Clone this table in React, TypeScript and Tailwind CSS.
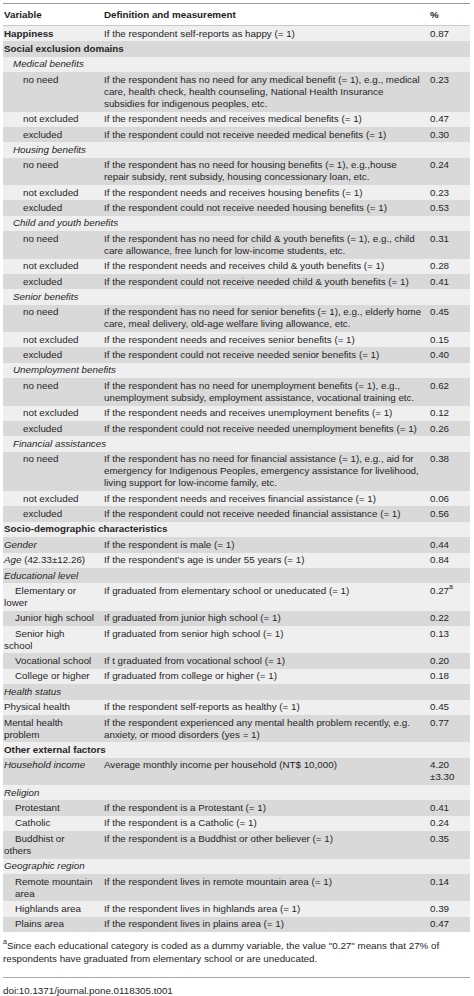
import type { ReactNode } from "react";

type Row = {
  label: ReactNode;
  lc: string;
  def?: string[];
  pct?: ReactNode;
  span?: boolean;
};

const SUB = "pl-[10px] italic";
const EX = "pl-[20px]";
const DEMO = "pl-[1px] indent-[11px]";
const PLAIN = "pl-[1px]";
const IT = "pl-[1px] italic";

const lines = (ls: string[]) =>
  ls.map((l, i) => (
    <span key={i}>
      {i > 0 && <br />}
      {l}
    </span>
  ));

const Sup = () => <span className="relative -top-[4px] align-top text-[7px] leading-[12px]">a</span>;

const domain = (title: string, rows: [string, string[], string][]): Row[] => [
  { label: title, lc: SUB, span: true },
  ...rows.map(([v, d, p]) => ({ label: v, lc: EX, def: d, pct: p })),
];

const rows: Row[] = [
  { label: "Happiness", lc: "pl-[1px] font-bold", def: ["If the respondent self-reports as happy (= 1)"], pct: "0.87" },
  { label: "Social exclusion domains", lc: "pl-[1px] font-bold", span: true },
  ...domain("Medical benefits", [
    ["no need", ["If the respondent has no need for any medical benefit (= 1), e.g., medical", "care, health check, health counseling, National Health Insurance", "subsidies for indigenous peoples, etc."], "0.23"],
    ["not excluded", ["If the respondent needs and receives medical benefits (= 1)"], "0.47"],
    ["excluded", ["If the respondent could not receive needed medical benefits (= 1)"], "0.30"],
  ]),
  ...domain("Housing benefits", [
    ["no need", ["If the respondent has no need for housing benefits (= 1), e.g.,house", "repair subsidy, rent subsidy, housing concessionary loan, etc."], "0.24"],
    ["not excluded", ["If the respondent needs and receives housing benefits (= 1)"], "0.23"],
    ["excluded", ["If the respondent could not receive needed housing benefits (= 1)"], "0.53"],
  ]),
  ...domain("Child and youth benefits", [
    ["no need", ["If the respondent has no need for child & youth benefits (= 1), e.g., child", "care allowance, free lunch for low-income students, etc."], "0.31"],
    ["not excluded", ["If the respondent needs and receives child & youth benefits (= 1)"], "0.28"],
    ["excluded", ["If the respondent could not receive needed child & youth benefits (= 1)"], "0.41"],
  ]),
  ...domain("Senior benefits", [
    ["no need", ["If the respondent has no need for senior benefits (= 1), e.g., elderly home", "care, meal delivery, old-age welfare living allowance, etc."], "0.45"],
    ["not excluded", ["If the respondent needs and receives senior benefits (= 1)"], "0.15"],
    ["excluded", ["If the respondent could not receive needed senior benefits (= 1)"], "0.40"],
  ]),
  ...domain("Unemployment benefits", [
    ["no need", ["If the respondent has no need for unemployment benefits (= 1), e.g.,", "unemployment subsidy, employment assistance, vocational training etc."], "0.62"],
    ["not excluded", ["If the respondent needs and receives unemployment benefits (= 1)"], "0.12"],
    ["excluded", ["If the respondent could not receive needed unemployment benefits (= 1)"], "0.26"],
  ]),
  ...domain("Financial assistances", [
    ["no need", ["If the respondent has no need for financial assistance (= 1), e.g., aid for", "emergency for Indigenous Peoples, emergency assistance for livelihood,", "living support for low-income family, etc."], "0.38"],
    ["not excluded", ["If the respondent needs and receives financial assistance (= 1)"], "0.06"],
    ["excluded", ["If the respondent could not receive needed financial assistance (= 1)"], "0.56"],
  ]),
  { label: "Socio-demographic characteristics", lc: "pl-[1px] font-bold", span: true },
  { label: "Gender", lc: IT, def: ["If the respondent is male (= 1)"], pct: "0.44" },
  {
    label: (
      <>
        <i>Age</i> (42.33±12.26)
      </>
    ),
    lc: PLAIN,
    def: ["If the respondent’s age is under 55 years (= 1)"],
    pct: "0.84",
  },
  { label: "Educational level", lc: IT, span: true },
  {
    label: lines(["Elementary or", "lower"]),
    lc: DEMO,
    def: ["If graduated from elementary school or uneducated (= 1)"],
    pct: (
      <>
        0.27
        <Sup />
      </>
    ),
  },
  { label: "Junior high school", lc: DEMO, def: ["If graduated from junior high school (= 1)"], pct: "0.22" },
  { label: lines(["Senior high", "school"]), lc: DEMO, def: ["If graduated from senior high school (= 1)"], pct: "0.13" },
  { label: "Vocational school", lc: DEMO, def: ["If t graduated from vocational school (= 1)"], pct: "0.20" },
  { label: "College or higher", lc: DEMO, def: ["If graduated from college or higher (= 1)"], pct: "0.18" },
  { label: "Health status", lc: IT, span: true },
  { label: "Physical health", lc: PLAIN, def: ["If the respondent self-reports as healthy (= 1)"], pct: "0.45" },
  {
    label: lines(["Mental health", "problem"]),
    lc: PLAIN,
    def: ["If the respondent experienced any mental health problem recently, e.g.", "anxiety, or mood disorders (yes = 1)"],
    pct: "0.77",
  },
  { label: "Other external factors", lc: "pl-[1px] font-bold", span: true },
  { label: "Household income", lc: IT, def: ["Average monthly income per household (NT$ 10,000)"], pct: lines(["4.20", "±3.30"]) },
  { label: "Religion", lc: IT, span: true },
  { label: "Protestant", lc: DEMO, def: ["If the respondent is a Protestant (= 1)"], pct: "0.41" },
  { label: "Catholic", lc: DEMO, def: ["If the respondent is a Catholic (= 1)"], pct: "0.24" },
  { label: lines(["Buddhist or", "others"]), lc: DEMO, def: ["If the respondent is a Buddhist or other believer (= 1)"], pct: "0.35" },
  { label: "Geographic region", lc: IT, span: true },
  { label: lines(["Remote mountain", "area"]), lc: "pl-[12px]", def: ["If the respondent lives in remote mountain area (= 1)"], pct: "0.14" },
  { label: "Highlands area", lc: DEMO, def: ["If the respondent lives in highlands area (= 1)"], pct: "0.39" },
  { label: "Plains area", lc: DEMO, def: ["If the respondent lives in plains area (= 1)"], pct: "0.47" },
];

export default function App() {
  return (
    <div className="min-h-[996px] bg-white px-[3px] pt-[3px] font-['Liberation_Sans',Arial,sans-serif] text-[9.8px] leading-[12px] text-[#262626]">
      <div className="w-[467px] border-t border-[#9a9a9a]">
        <div className="grid grid-cols-[101px_326px_1fr] border-b border-[#c8c8c8] bg-white pt-[5px] pb-[4px] font-bold text-[#222]">
          <div className="pl-[1px]">Variable</div>
          <div>Definition and measurement</div>
          <div>%</div>
        </div>
        {rows.map((r, i) => (
          <div
            key={i}
            className={`grid grid-cols-[101px_326px_1fr] whitespace-nowrap py-[1.7px] ${
              i % 2 === 0 ? "bg-[#efefef]" : "bg-[#d9d9d9]"
            }`}
          >
            {r.span ? (
              <div className={`col-span-3 ${r.lc}`}>{r.label}</div>
            ) : (
              <>
                <div className={r.lc}>{r.label}</div>
                <div>{lines(r.def ?? [])}</div>
                <div>{r.pct}</div>
              </>
            )}
          </div>
        ))}
      </div>
      <div className="w-[467px] pt-[8px] pb-[12px] leading-[12.5px]">
        <Sup />
        Since each educational category is coded as a dummy variable, the value "0.27" means that 27% of
        <br />
        respondents have graduated from elementary school or are uneducated.
      </div>
      <div className="w-[467px] border-t border-[#a8a8a8] pt-[7px]">doi:10.1371/journal.pone.0118305.t001</div>
    </div>
  );
}
